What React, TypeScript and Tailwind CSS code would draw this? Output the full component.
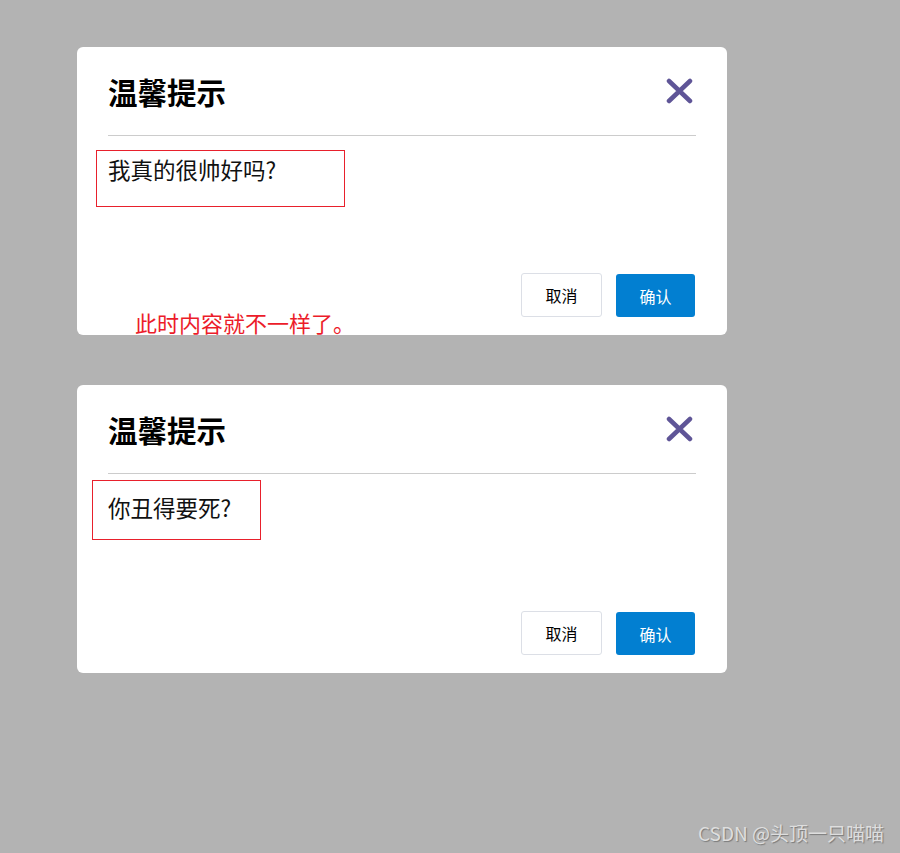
import React from 'react';

const font = { fontFamily: '"Noto Sans CJK SC", "Noto Sans", sans-serif' };

const CloseIcon: React.FC = () => (
  <svg width="27" height="26" viewBox="0 0 27 26" className="shrink-0">
    <path d="M3 3 L24 23 M24 3 L3 23" stroke="#5f5597" strokeWidth="4.5" strokeLinecap="round" fill="none" />
  </svg>
);

const Dialog: React.FC<{
  text: string;
  box: string;
  children?: React.ReactNode;
}> = ({ text, box, children }) => (
  <div className="relative w-[650px] h-[288px] bg-white rounded-[6px] flex flex-col">
    {/* header */}
    <div className="mx-[31px] h-[89px] flex items-center justify-between border-b border-[#cccccc]">
      <h2 className="text-[29.5px] leading-[36px] font-bold text-black">温馨提示</h2>
      <div className="mr-[3px]">
        <CloseIcon />
      </div>
    </div>

    {/* body */}
    <div className="relative px-[31px] pt-[18px]">
      <p className="text-[22.5px] leading-[30px] text-[#111]">{text}</p>
      <div className={`absolute border border-[#e8202c] ${box}`} />
    </div>

    {/* footer */}
    <div className="mt-auto mb-[18px] mr-[32px] flex justify-end gap-[14px]">
      <button className="w-[81px] h-[44px] rounded-[3px] border border-[#dcdfe6] bg-white text-[16px] text-black">
        取消
      </button>
      <button className="w-[79px] h-[43px] mt-[1px] rounded-[3px] bg-[#027fd1] text-[16px] text-white">
        确认
      </button>
    </div>
    {children}
  </div>
);

export default function App() {
  return (
    <div className="relative min-h-[853px] w-full bg-[#b3b3b3] pt-[47px] pl-[77px]" style={font}>
      <div className="flex flex-col gap-[50px]">
        <Dialog text="我真的很帅好吗?" box="left-[19px] top-[14px] w-[249px] h-[57px]">
          <span className="absolute left-[58px] top-[260px] text-[22px] leading-[30px] text-[#ec1c2a]">
            此时内容就不一样了。
          </span>
        </Dialog>
        <Dialog text="你丑得要死?" box="left-[15px] top-[6px] w-[169px] h-[60px]" />
      </div>

      <div
        className="absolute right-[16px] bottom-[8px] text-[19px] leading-[24px] text-[#dedede]"
        style={{ textShadow: '1px 1px 1px #7a7a7a' }}
      >
        CSDN @头顶一只喵喵
      </div>
    </div>
  );
}
